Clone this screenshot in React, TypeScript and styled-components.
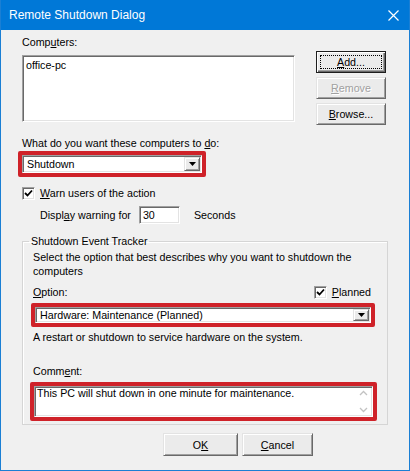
import styled, { createGlobalStyle } from "styled-components";
import { FC, ReactNode } from "react";

const GlobalStyle = createGlobalStyle`
  html, body {
    margin: 0;
    padding: 0;
    background: #f0f0f0;
  }
  * {
    box-sizing: border-box;
  }
`;

const RED = "#cf2229";

const Window = styled.div`
  width: 410px;
  height: 471px;
  display: flex;
  flex-direction: column;
  border: 1px solid #1a7fd4;
  border-top: none;
  font-family: "Liberation Sans", Arial, sans-serif;
  font-size: 10.7px;
  color: #000;
  overflow: hidden;
`;

const TitleBar = styled.div`
  height: 30px;
  margin: 0 -1px;
  background: #0078d7;
  color: #fff;
  display: flex;
  align-items: center;
  justify-content: space-between;
  padding: 0 11px 0 9px;
  font-family: "Liberation Sans", Arial, sans-serif;
  font-size: 12px;
`;

const Body = styled.div`
  flex: 1;
  background: #f0f0f0;
  padding: 5px 0 0 21px;
  display: flex;
  flex-direction: column;
`;

const Label = styled.div<{ $mt?: number }>`
  height: 14px;
  line-height: 14px;
  margin-top: ${(p) => p.$mt ?? 0}px;
  white-space: nowrap;
`;

const TopRow = styled.div`
  display: flex;
  align-items: flex-start;
`;

const ListColumn = styled.div`
  display: flex;
  flex-direction: column;
`;

const sunken = `
  background: #fff;
  border: 1px solid;
  border-color: #a0a0a0 #ffffff #ffffff #a0a0a0;
  box-shadow: inset 1px 1px 0 #696969, inset -1px -1px 0 #e3e3e3;
`;

const ListBox = styled.div`
  ${sunken}
  margin-top: 6px;
  width: 273px;
  height: 67px;
  padding: 2px 3px;
  line-height: 14px;
`;

const ButtonColumn = styled.div`
  margin: 16px 0 -3px 21px;
  display: flex;
  flex-direction: column;
  gap: 4px;
`;

const Button = styled.button<{ $w?: number; $h?: number; $default?: boolean }>`
  position: relative;
  width: ${(p) => p.$w ?? 70}px;
  height: ${(p) => p.$h ?? 22}px;
  padding: 0;
  font: inherit;
  color: #000;
  background: #ebebeb;
  border: 1px solid;
  border-color: ${(p) => (p.$default ? "#1e1e1e" : "#e3e3e3 #696969 #696969 #e3e3e3")};
  box-shadow: ${(p) =>
    p.$default
      ? "inset 1px 1px 0 #fff, inset -1px -1px 0 #696969, inset -2px -2px 0 #a0a0a0"
      : "inset 1px 1px 0 #fff, inset -1px -1px 0 #a0a0a0"};
  &:disabled {
    color: #a0a0a0;
    text-shadow: 1px 1px 0 #fff;
  }
`;

const FocusRing = styled.span`
  position: absolute;
  inset: 3px;
  border: 1px dotted #000;
  pointer-events: none;
`;

const Key = styled.span`
  text-decoration: underline;
  text-underline-offset: 1px;
`;

const Highlight = styled.div<{ $w: number; $ml: number; $mt: number }>`
  width: ${(p) => p.$w}px;
  margin-left: ${(p) => p.$ml}px;
  margin-top: ${(p) => p.$mt}px;
  border: 4px solid ${RED};
  border-radius: 2px;
`;

const Combo = styled.div<{ $h: number }>`
  ${sunken}
  height: ${(p) => p.$h}px;
  display: flex;
  align-items: stretch;
`;

const ComboText = styled.div`
  flex: 1;
  display: flex;
  align-items: center;
  padding-left: 4px;
  white-space: nowrap;
`;

const DropButton = styled.div`
  width: 16px;
  margin: 1px;
  background: #ebebeb;
  border: 1px solid;
  border-color: #e3e3e3 #696969 #696969 #e3e3e3;
  box-shadow: inset 1px 1px 0 #fff, inset -1px -1px 0 #a0a0a0;
  display: flex;
  align-items: center;
  justify-content: center;
`;

const CheckRow = styled.div<{ $mt?: number }>`
  display: flex;
  align-items: center;
  gap: 5px;
  height: 14px;
  margin-top: ${(p) => p.$mt ?? 0}px;
  white-space: nowrap;
`;

const CheckBox = styled.div`
  ${sunken}
  width: 13px;
  height: 13px;
  display: flex;
  align-items: center;
  justify-content: center;
`;

const WarnRow = styled.div`
  display: flex;
  align-items: center;
  margin: 6px 0 0 18px;
  height: 18px;
`;

const NumberBox = styled.div`
  ${sunken}
  width: 41px;
  height: 18px;
  margin: 0 14px 0 8px;
  padding-left: 3px;
  line-height: 16px;
`;

const Group = styled.fieldset`
  margin: 10px 0 0 0;
  width: 364px;
  padding: 0 10px 3px 10px;
  border: 1px solid #d5d5d5;
  box-shadow: inset 1px 1px 0 #fff;
  border-radius: 0;
`;

const Legend = styled.legend`
  padding: 0 2px;
  margin-left: -4px;
  height: 14px;
  line-height: 14px;
`;

const Paragraph = styled.div`
  margin-top: 2px;
  line-height: 14px;
`;

const OptionRow = styled.div`
  display: flex;
  justify-content: space-between;
  align-items: center;
  margin-top: 7px;
  height: 14px;
  padding-right: 6px;
`;

const CommentBox = styled.div`
  ${sunken}
  height: 31px;
  display: flex;
`;

const CommentText = styled.div`
  flex: 1;
  padding: 0 2px;
  line-height: 13px;
`;

const ScrollTrack = styled.div`
  width: 17px;
  display: flex;
  flex-direction: column;
  align-items: center;
  justify-content: space-between;
  padding: 3px 0 3px;
`;

const Footer = styled.div`
  display: flex;
  gap: 4px;
  margin: 8px 0 0 141px;
`;

const Check: FC = () => (
  <svg width="9" height="9" viewBox="0 0 9 9">
    <path d="M1 4 L3.5 6.5 L8 1.5" fill="none" stroke="#000" strokeWidth="1.8" />
  </svg>
);

const Arrow: FC = () => (
  <svg width="7" height="4" viewBox="0 0 7 4">
    <path d="M0 0 H7 L3.5 4 Z" fill="#000" />
  </svg>
);

const Chevron: FC<{ up?: boolean }> = ({ up }) => (
  <svg width="9" height="6" viewBox="0 0 9 6">
    <path
      d={up ? "M1 5 L4.5 1.5 L8 5" : "M1 1 L4.5 4.5 L8 1"}
      fill="none"
      stroke="#c2c2c2"
      strokeWidth="1.3"
    />
  </svg>
);

const CloseIcon: FC = () => (
  <svg width="11" height="11" viewBox="0 0 11 11">
    <path d="M0.5 0.5 L10.5 10.5 M10.5 0.5 L0.5 10.5" stroke="#fff" strokeWidth="1.2" />
  </svg>
);

const Mn: FC<{ before?: string; k: string; after?: string }> = ({ before, k, after }) => (
  <>
    {before}
    <Key>{k}</Key>
    {after}
  </>
);

const Checked: FC<{ children: ReactNode; mt?: number }> = ({ children, mt }) => (
  <CheckRow $mt={mt}>
    <CheckBox>
      <Check />
    </CheckBox>
    <span>{children}</span>
  </CheckRow>
);

export default function App() {
  return (
    <>
      <GlobalStyle />
      <Window>
        <TitleBar>
          <span>Remote Shutdown Dialog</span>
          <CloseIcon />
        </TitleBar>
        <Body>
          <TopRow>
            <ListColumn>
              <Label>
                <Mn before="Comp" k="u" after="ters:" />
              </Label>
              <ListBox>office-pc</ListBox>
            </ListColumn>
            <ButtonColumn>
              <Button $default>
                <FocusRing />
                <Mn k="A" after="dd..." />
              </Button>
              <Button disabled>
                <Mn k="R" after="emove" />
              </Button>
              <Button>
                <Mn k="B" after="rowse..." />
              </Button>
            </ButtonColumn>
          </TopRow>

          <Label $mt={14}>
            <Mn before="What do you want these computers to " k="d" after="o:" />
          </Label>
          <Highlight $w={188} $ml={-4} $mt={1}>
            <Combo $h={18}>
              <ComboText>Shutdown</ComboText>
              <DropButton>
                <Arrow />
              </DropButton>
            </Combo>
          </Highlight>

          <Checked mt={9}>
            <Mn k="W" after="arn users of the action" />
          </Checked>
          <WarnRow>
            <span>
              <Mn before="Displ" k="a" after="y warning for" />
            </span>
            <NumberBox>30</NumberBox>
            <span>Seconds</span>
          </WarnRow>

          <Group>
            <Legend>Shutdown Event Tracker</Legend>
            <Paragraph>
              Select the option that best describes why you want to shutdown the
              <br />
              computers
            </Paragraph>
            <OptionRow>
              <span>
                <Mn k="O" after="ption:" />
              </span>
              <Checked>
                <Mn k="P" after="lanned" />
              </Checked>
            </OptionRow>
            <Highlight $w={344} $ml={-2} $mt={4}>
              <Combo $h={16}>
                <ComboText>Hardware: Maintenance (Planned)</ComboText>
                <DropButton>
                  <Arrow />
                </DropButton>
              </Combo>
            </Highlight>
            <Label $mt={3}>A restart or shutdown to service hardware on the system.</Label>
            <Label $mt={20}>
              <Mn before="Comm" k="e" after="nt:" />
            </Label>
            <Highlight $w={347} $ml={-3} $mt={4}>
              <CommentBox>
                <CommentText>This PC will shut down in one minute for maintenance.</CommentText>
                <ScrollTrack>
                  <Chevron up />
                  <Chevron />
                </ScrollTrack>
              </CommentBox>
            </Highlight>
          </Group>

          <Footer>
            <Button $w={75} $h={23}>
              <Mn before="O" k="K" />
            </Button>
            <Button $w={71} $h={23}>
              <Mn k="C" after="ancel" />
            </Button>
          </Footer>
        </Body>
      </Window>
    </>
  );
}
